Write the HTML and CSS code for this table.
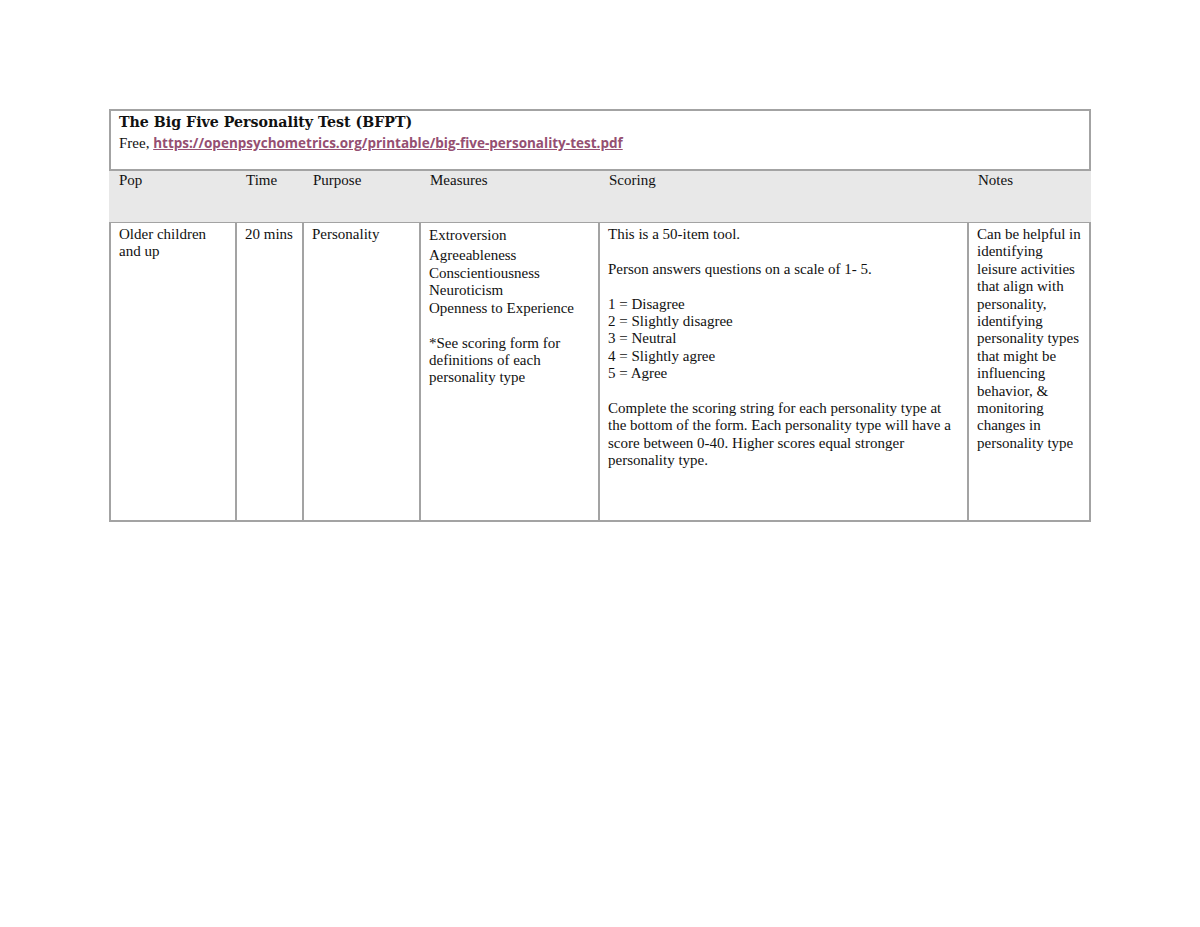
FILE: index.html
```html
<!DOCTYPE html>
<html>
<head>
<meta charset="utf-8">
<link rel="stylesheet" href="styles.css">
</head>
<body>
<div class="sheet">
  <div class="titlebox">
    <div class="title">The Big Five Personality Test (BFPT)</div>
    <div class="free">Free, <a class="link" href="#">https://openpsychometrics.org/printable/big-five-personality-test.pdf</a></div>
  </div>
  <table class="grid">
    <colgroup>
      <col class="c1"><col class="c2"><col class="c3"><col class="c4"><col class="c5"><col class="c6">
    </colgroup>
    <thead>
      <tr class="head">
        <th>Pop</th><th>Time</th><th>Purpose</th><th>Measures</th><th>Scoring</th><th>Notes</th>
      </tr>
    </thead>
    <tbody>
      <tr class="body">
        <td>Older children and up</td>
        <td>20 mins</td>
        <td>Personality</td>
        <td>
          <div class="m1">Extroversion</div>
          <div class="m1">Agreeableness</div>
          <div>Conscientiousness</div>
          <div>Neuroticism</div>
          <div>Openness to Experience</div>
          <div class="gap">*See scoring form for definitions of each personality type</div>
        </td>
        <td>
          <div>This is a 50-item tool.</div>
          <div class="gap">Person answers questions on a scale of 1- 5.</div>
          <div class="gap">1 = Disagree</div>
          <div>2 = Slightly disagree</div>
          <div>3 = Neutral</div>
          <div>4 = Slightly agree</div>
          <div>5 = Agree</div>
          <div class="gap">Complete the scoring string for each personality type at the bottom of the form. Each personality type will have a score between 0-40. Higher scores equal stronger personality type.</div>
        </td>
        <td>Can be helpful in identifying leisure activities that align with personality, identifying personality types that might be influencing behavior, &amp; monitoring changes in personality type</td>
      </tr>
    </tbody>
  </table>
</div>
</body>
</html>
```
FILE: styles.css
```css
html, body {
  margin: 0;
  padding: 0;
  background: #ffffff;
}
body {
  font-family: "Liberation Serif", "Times New Roman", serif;
  font-size: 15px;
  color: #111;
}
.sheet {
  margin: 109px 0 0 109px;
  width: 982px;
}
.titlebox {
  box-sizing: border-box;
  height: 62px;
  border: 2px solid #a3a3a3;
  padding: 1px 8px 0 8px;
}
.title {
  font-family: "DejaVu Serif", serif;
  font-weight: bold;
  font-size: 14.2px;
  line-height: 20px;
}
.free {
  margin-top: 2px;
  font-size: 15px;
  line-height: 18px;
}
.link {
  font-family: "Open Sans", sans-serif;
  font-weight: bold;
  font-size: 13.5px;
  color: #954f72;
  text-decoration: underline;
}
.grid {
  width: 982px;
  border-collapse: separate;
  border-spacing: 0;
  table-layout: fixed;
}
.c1 { width: 127px; }
.c2 { width: 67px; }
.c3 { width: 117px; }
.c4 { width: 179px; }
.c5 { width: 369px; }
.c6 { width: 123px; }
.head th {
  background: #e8e8e8;
  height: 51px;
  box-sizing: border-box;
  font-weight: normal;
  text-align: left;
  vertical-align: top;
  padding: 1px 6px 0 10px;
  line-height: 17px;
}
.body td {
  height: 300px;
  box-sizing: border-box;
  vertical-align: top;
  border: 1px solid #a3a3a3;
  border-bottom-width: 2px;
  padding: 3px 4px 0 8px;
  line-height: 17.4px;
}
.body td:first-child { border-left-width: 2px; }
.body td:last-child { border-right-width: 2px; }
.m1 { line-height: 19.5px; }
.gap { margin-top: 17.4px; }
```
